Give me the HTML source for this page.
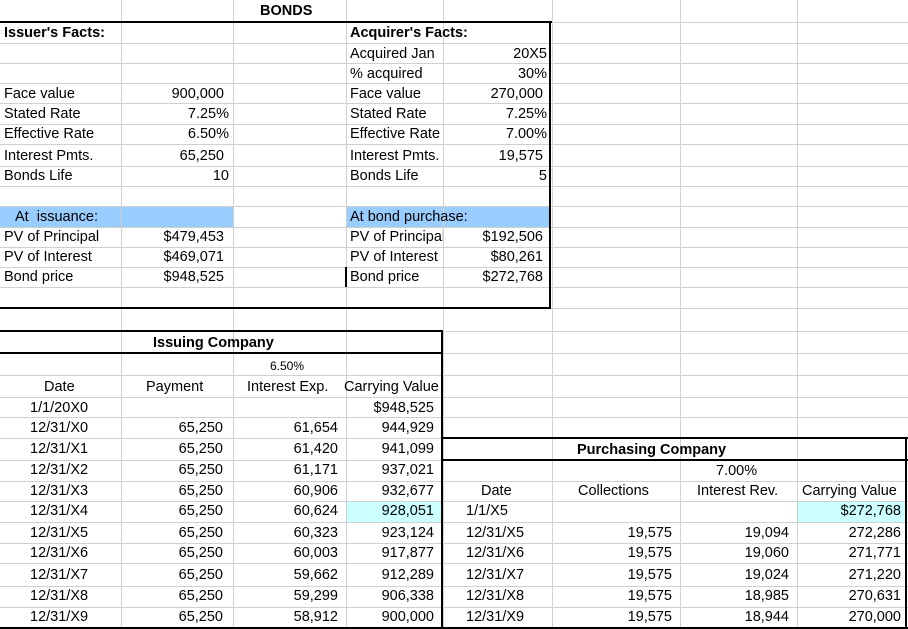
<!DOCTYPE html>
<html><head><meta charset="utf-8"><style>
body{margin:0;width:908px;height:629px;overflow:hidden;background:#fff;position:relative;font-family:"Liberation Sans",Arial,sans-serif;font-size:14.5px;color:#000}
.h{position:absolute;left:0;width:908px;height:1px;background:#d0d0d0}
.v{position:absolute;top:0;height:629px;width:1px;background:#d0d0d0}
.f{position:absolute}
.k{position:absolute;background:#000}
.t{position:absolute;white-space:nowrap;line-height:20px;overflow:hidden}
.r{text-align:right}
.b{font-weight:bold}
</style></head><body>
<!-- fills -->
<div class="f" style="left:0;top:206px;width:233px;height:21px;background:#99ccff"></div>
<div class="f" style="left:346px;top:206px;width:204px;height:21px;background:#99ccff"></div>
<div class="f" style="left:346px;top:501px;width:96px;height:21px;background:#ccffff"></div>
<div class="f" style="left:797px;top:501px;width:109px;height:21px;background:#ccffff"></div>
<!-- grid -->
<div class="h" style="top:22px"></div><div class="h" style="top:43px"></div><div class="h" style="top:63px"></div><div class="h" style="top:83px"></div><div class="h" style="top:103px"></div><div class="h" style="top:124px"></div><div class="h" style="top:144px"></div><div class="h" style="top:166px"></div><div class="h" style="top:186px"></div><div class="h" style="top:206px"></div><div class="h" style="top:227px"></div><div class="h" style="top:247px"></div><div class="h" style="top:267px"></div><div class="h" style="top:287px"></div><div class="h" style="top:308px"></div>
<div class="h" style="top:331px"></div><div class="h" style="top:353px"></div>
<div class="h" style="top:375px"></div><div class="h" style="top:397px"></div><div class="h" style="top:417px"></div><div class="h" style="top:438px"></div><div class="h" style="top:460px"></div><div class="h" style="top:481px"></div><div class="h" style="top:501px"></div><div class="h" style="top:522px"></div><div class="h" style="top:543px"></div><div class="h" style="top:563px"></div><div class="h" style="top:586px"></div><div class="h" style="top:607px"></div>
<div class="v" style="left:121px"></div><div class="v" style="left:233px"></div><div class="v" style="left:346px"></div><div class="v" style="left:443px"></div><div class="v" style="left:552px"></div><div class="v" style="left:680px"></div><div class="v" style="left:797px"></div>
<!-- thick borders -->
<div class="k" style="left:0;top:21px;width:552px;height:2px"></div>
<div class="k" style="left:549px;top:21px;width:2px;height:288px"></div>
<div class="k" style="left:0;top:307px;width:551px;height:2px"></div>
<div class="k" style="left:345px;top:267px;width:2px;height:20px"></div>
<div class="k" style="left:0;top:330px;width:443px;height:2px"></div>
<div class="k" style="left:0;top:352px;width:443px;height:2px"></div>
<div class="k" style="left:441px;top:330px;width:2px;height:299px"></div>
<div class="k" style="left:442px;top:437px;width:466px;height:2px"></div>
<div class="k" style="left:442px;top:459px;width:466px;height:2px"></div>
<div class="k" style="left:905px;top:437px;width:2px;height:192px"></div>
<div class="k" style="left:0;top:627px;width:908px;height:2px"></div>
<!-- top text -->
<div class="t b" style="left:260px;top:1px">BONDS</div>
<div class="t b" style="left:4px;top:23px">Issuer's Facts:</div>
<div class="t b" style="left:350px;top:23px">Acquirer's Facts:</div>
<div class="t" style="left:350px;top:44px;width:93px">Acquired Jan</div><div class="t r" style="right:361px;top:44px">20X5</div>
<div class="t" style="left:350px;top:64px">% acquired</div><div class="t r" style="right:361px;top:64px">30%</div>
<div class="t" style="left:4px;top:84px">Face value</div><div class="t r" style="right:684px;top:84px">900,000</div>
<div class="t" style="left:350px;top:84px">Face value</div><div class="t r" style="right:365px;top:84px">270,000</div>
<div class="t" style="left:4px;top:104px">Stated Rate</div><div class="t r" style="right:679px;top:104px">7.25%</div>
<div class="t" style="left:350px;top:104px">Stated Rate</div><div class="t r" style="right:361px;top:104px">7.25%</div>
<div class="t" style="left:4px;top:124px">Effective Rate</div><div class="t r" style="right:679px;top:124px">6.50%</div>
<div class="t" style="left:350px;top:124px;width:93px">Effective Rate</div><div class="t r" style="right:361px;top:124px">7.00%</div>
<div class="t" style="left:4px;top:146px">Interest Pmts.</div><div class="t r" style="right:684px;top:146px">65,250</div>
<div class="t" style="left:350px;top:146px;width:93px">Interest Pmts.</div><div class="t r" style="right:365px;top:146px">19,575</div>
<div class="t" style="left:4px;top:166px">Bonds Life</div><div class="t r" style="right:679px;top:166px">10</div>
<div class="t" style="left:350px;top:166px">Bonds Life</div><div class="t r" style="right:361px;top:166px">5</div>
<div class="t" style="left:15px;top:207px">At &nbsp;issuance:</div>
<div class="t" style="left:350px;top:207px">At bond purchase:</div>
<div class="t" style="left:4px;top:227px">PV of Principal</div><div class="t r" style="right:684px;top:227px">$479,453</div>
<div class="t" style="left:350px;top:227px;width:93px">PV of Principal</div><div class="t r" style="right:365px;top:227px">$192,506</div>
<div class="t" style="left:4px;top:247px">PV of Interest</div><div class="t r" style="right:684px;top:247px">$469,071</div>
<div class="t" style="left:350px;top:247px;width:93px">PV of Interest</div><div class="t r" style="right:365px;top:247px">$80,261</div>
<div class="t" style="left:4px;top:267px">Bond price</div><div class="t r" style="right:684px;top:267px">$948,525</div>
<div class="t" style="left:350px;top:267px">Bond price</div><div class="t r" style="right:365px;top:267px">$272,768</div>
<!-- issuing -->
<div class="t b" style="left:153px;top:333px">Issuing Company</div>
<div class="t" style="left:270px;top:356px;font-size:12px">6.50%</div>
<div class="t" style="left:44px;top:377px">Date</div>
<div class="t" style="left:146px;top:377px">Payment</div>
<div class="t" style="left:247px;top:377px">Interest Exp.</div>
<div class="t" style="left:344px;top:377px">Carrying Value</div>
<div class="t" style="left:30px;top:398px">1/1/20X0</div><div class="t r" style="right:474px;top:398px">$948,525</div>
<div class="t" style="left:30px;top:418px">12/31/X0</div><div class="t r" style="right:685px;top:418px">65,250</div><div class="t r" style="right:570px;top:418px">61,654</div><div class="t r" style="right:474px;top:418px">944,929</div>
<div class="t" style="left:30px;top:439px">12/31/X1</div><div class="t r" style="right:685px;top:439px">65,250</div><div class="t r" style="right:570px;top:439px">61,420</div><div class="t r" style="right:474px;top:439px">941,099</div>
<div class="t" style="left:30px;top:460px">12/31/X2</div><div class="t r" style="right:685px;top:460px">65,250</div><div class="t r" style="right:570px;top:460px">61,171</div><div class="t r" style="right:474px;top:460px">937,021</div>
<div class="t" style="left:30px;top:481px">12/31/X3</div><div class="t r" style="right:685px;top:481px">65,250</div><div class="t r" style="right:570px;top:481px">60,906</div><div class="t r" style="right:474px;top:481px">932,677</div>
<div class="t" style="left:30px;top:501px">12/31/X4</div><div class="t r" style="right:685px;top:501px">65,250</div><div class="t r" style="right:570px;top:501px">60,624</div><div class="t r" style="right:474px;top:501px">928,051</div>
<div class="t" style="left:30px;top:523px">12/31/X5</div><div class="t r" style="right:685px;top:523px">65,250</div><div class="t r" style="right:570px;top:523px">60,323</div><div class="t r" style="right:474px;top:523px">923,124</div>
<div class="t" style="left:30px;top:543px">12/31/X6</div><div class="t r" style="right:685px;top:543px">65,250</div><div class="t r" style="right:570px;top:543px">60,003</div><div class="t r" style="right:474px;top:543px">917,877</div>
<div class="t" style="left:30px;top:565px">12/31/X7</div><div class="t r" style="right:685px;top:565px">65,250</div><div class="t r" style="right:570px;top:565px">59,662</div><div class="t r" style="right:474px;top:565px">912,289</div>
<div class="t" style="left:30px;top:586px">12/31/X8</div><div class="t r" style="right:685px;top:586px">65,250</div><div class="t r" style="right:570px;top:586px">59,299</div><div class="t r" style="right:474px;top:586px">906,338</div>
<div class="t" style="left:30px;top:607px">12/31/X9</div><div class="t r" style="right:685px;top:607px">65,250</div><div class="t r" style="right:570px;top:607px">58,912</div><div class="t r" style="right:474px;top:607px">900,000</div>
<!-- purchasing -->
<div class="t b" style="left:577px;top:440px">Purchasing Company</div>
<div class="t" style="left:716px;top:461px">7.00%</div>
<div class="t" style="left:481px;top:481px">Date</div>
<div class="t" style="left:578px;top:481px">Collections</div>
<div class="t" style="left:697px;top:481px">Interest Rev.</div>
<div class="t" style="left:802px;top:481px">Carrying Value</div>
<div class="t" style="left:466px;top:501px">1/1/X5</div><div class="t r" style="right:7px;top:501px">$272,768</div>
<div class="t" style="left:466px;top:523px">12/31/X5</div><div class="t r" style="right:236px;top:523px">19,575</div><div class="t r" style="right:119px;top:523px">19,094</div><div class="t r" style="right:7px;top:523px">272,286</div>
<div class="t" style="left:466px;top:543px">12/31/X6</div><div class="t r" style="right:236px;top:543px">19,575</div><div class="t r" style="right:119px;top:543px">19,060</div><div class="t r" style="right:7px;top:543px">271,771</div>
<div class="t" style="left:466px;top:565px">12/31/X7</div><div class="t r" style="right:236px;top:565px">19,575</div><div class="t r" style="right:119px;top:565px">19,024</div><div class="t r" style="right:7px;top:565px">271,220</div>
<div class="t" style="left:466px;top:586px">12/31/X8</div><div class="t r" style="right:236px;top:586px">19,575</div><div class="t r" style="right:119px;top:586px">18,985</div><div class="t r" style="right:7px;top:586px">270,631</div>
<div class="t" style="left:466px;top:607px">12/31/X9</div><div class="t r" style="right:236px;top:607px">19,575</div><div class="t r" style="right:119px;top:607px">18,944</div><div class="t r" style="right:7px;top:607px">270,000</div>
</body></html>
